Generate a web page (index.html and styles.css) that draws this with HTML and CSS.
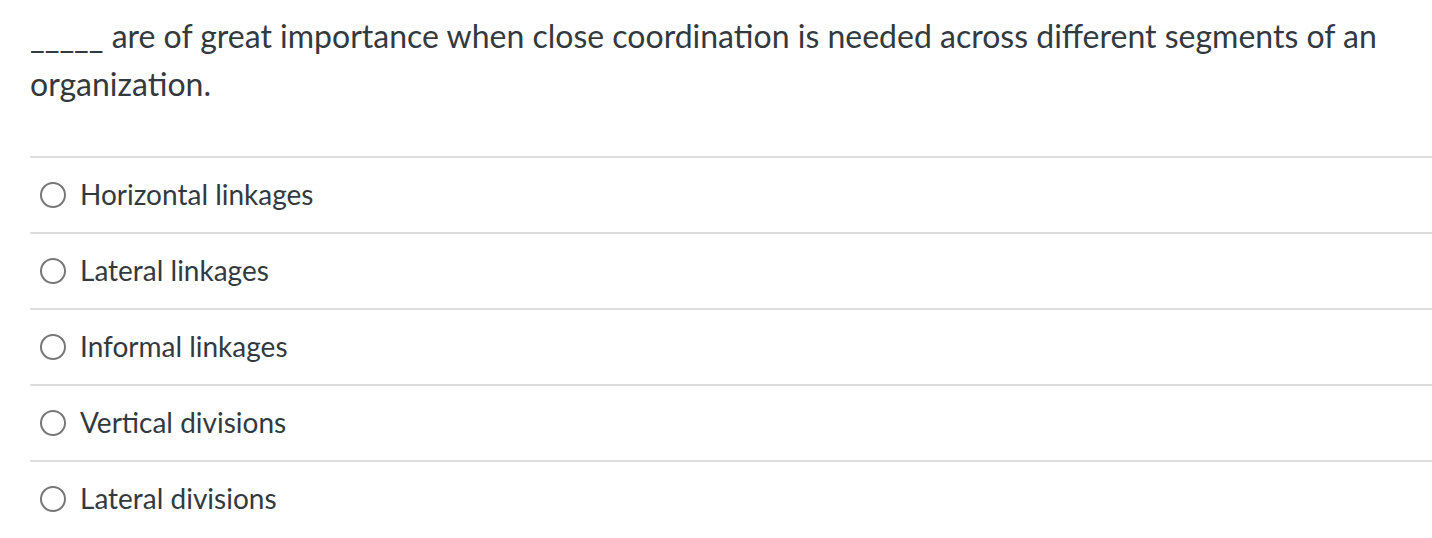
FILE: index.html
```html
<!DOCTYPE html>
<html>
<head>
<meta charset="utf-8">
<link rel="stylesheet" href="styles.css">
</head>
<body>
<div class="quiz">
  <p class="question">_____ are of great importance when close coordination is needed across different segments of an organization.</p>
  <ul class="answers">
    <li class="answer"><span class="radio"></span><span class="label">Horizontal linkages</span></li>
    <li class="answer"><span class="radio"></span><span class="label">Lateral linkages</span></li>
    <li class="answer"><span class="radio"></span><span class="label">Informal linkages</span></li>
    <li class="answer"><span class="radio"></span><span class="label">Vertical divisions</span></li>
    <li class="answer"><span class="radio"></span><span class="label">Lateral divisions</span></li>
  </ul>
</div>
</body>
</html>
```
FILE: styles.css
```css
html, body {
  margin: 0;
  padding: 0;
  background: #fff;
}
.quiz {
  padding: 12px 0 0 30px;
  font-family: Lato, "Liberation Sans", sans-serif;
}
.question {
  margin: 0;
  font-size: 32px;
  line-height: 48px;
  padding-right: 40px;
  color: #333a3f;
}
.answers {
  list-style: none;
  margin: 48px 0 0 0;
  padding: 0;
}
.answer {
  display: flex;
  align-items: center;
  height: 72px;
  padding-bottom: 2px;
  border-top: 2px solid #dddddd;
  font-size: 28px;
  color: #333a3f;
}
.radio {
  width: 26px;
  height: 26px;
  border: 2px solid #777777;
  border-radius: 50%;
  margin-left: 10px;
  margin-right: 14px;
  box-sizing: border-box;
  flex: none;
  position: relative;
  top: 1px;
}
```
